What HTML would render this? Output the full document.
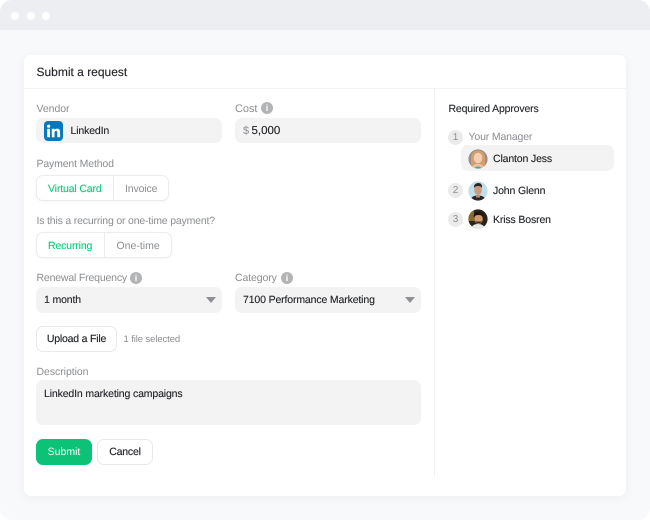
<!DOCTYPE html>
<html><head><meta charset="utf-8">
<style>
html,body{margin:0;padding:0;width:650px;height:520px;overflow:hidden;background:#fff}
*{box-sizing:border-box}
body{font-family:"Liberation Sans",sans-serif;font-size:10.5px;color:#1f2125;text-rendering:geometricPrecision}
.a{position:absolute;white-space:nowrap}
#win{position:absolute;left:0;top:0;width:650px;height:520px;background:#f8f9fb;border-radius:12px;overflow:hidden}
#bar{position:absolute;left:0;top:0;width:650px;height:30px;background:#edeef1}
.dot{position:absolute;top:12px;width:8px;height:8px;border-radius:50%;background:#fff}
#card{position:absolute;left:24px;top:55px;width:602px;height:441px;background:#fff;border-radius:7px;box-shadow:0 2px 10px rgba(30,40,60,.05)}
.lbl{color:#8b8d90;font-size:10.5px;line-height:14px;letter-spacing:-.05px}
.inp{position:absolute;background:#f3f3f3;border-radius:7px}
.seg{position:absolute;background:#fff;border:1px solid #ebecec;border-radius:7px;box-shadow:0 1px 2px rgba(0,0,0,.04)}
.btn{position:absolute;background:#fff;border:1px solid #e8e9ea;border-radius:7px;text-align:center;font-size:10.5px;letter-spacing:-.2px;color:#202226;-webkit-text-stroke:.15px #202226}
.info{position:absolute;width:12px;height:12px;border-radius:50%;background:#b3b4b6;color:#fff;font-size:9px;font-weight:bold;line-height:12px;text-align:center}
.tri{position:absolute;width:0;height:0;border-left:5.5px solid transparent;border-right:5.5px solid transparent;border-top:6px solid #8f9093}
.num{position:absolute;width:15px;height:15px;border-radius:50%;background:#ebebeb;color:#8d8e90;font-size:10px;line-height:15px;text-align:center}
.t{line-height:14px;letter-spacing:-.14px;-webkit-text-stroke:.12px #1f2125}
.g{line-height:14px;letter-spacing:-.14px;color:#0fce7c;-webkit-text-stroke:.12px #0fce7c}
.m{line-height:14px;letter-spacing:-.14px;color:#8b8d90}
</style></head>
<body>
<div id="win">
<div id="bar"></div>
<div class="dot" style="left:11px"></div><div class="dot" style="left:27px"></div><div class="dot" style="left:42px"></div>
<div id="card"></div>
<div class="a" style="left:24px;top:88px;width:602px;height:1px;background:#f3f3f4"></div>
<div class="a" style="left:434px;top:89px;width:1px;height:388px;background:#f1f1f2"></div>
<div class="a t" style="left:36.5px;top:64.500px;font-size:12px;letter-spacing:0;color:#212327">Submit a request</div>

<div class="a lbl" style="left:36.5px;top:101.500px">Vendor</div>
<div class="inp" style="left:36px;top:118px;width:186px;height:25px"></div>
<svg class="a" style="left:44px;top:121px" width="19" height="20" viewBox="0 0 19 20"><rect width="19" height="20" rx="4" fill="#0a78b8"/><rect x="3.2" y="7.8" width="2.8" height="8.4" fill="#fff"/><circle cx="4.6" cy="5.2" r="1.6" fill="#fff"/><path d="M7.8 7.8h2.7v1.2c.5-.8 1.4-1.4 2.6-1.4 2.3 0 3 1.4 3 3.6v5h-2.8v-4.400c0-1.100-.3-1.900-1.300-1.900-1.100 0-1.500.8-1.500 1.900v4.400H7.800z" fill="#fff"/></svg>
<div class="a t" style="left:70.5px;top:123.500px">LinkedIn</div>

<div class="a lbl" style="left:235px;top:101.500px;font-size:11px">Cost</div>
<div class="info" style="left:261px;top:102px">i</div>
<div class="inp" style="left:235px;top:118px;width:186px;height:25px"></div>
<div class="a m" style="left:243px;top:123.500px;font-size:11px">$</div>
<div class="a t" style="left:251.5px;top:123.500px;font-size:11.5px;letter-spacing:0">5,000</div>

<div class="a lbl" style="left:36.5px;top:156.500px;letter-spacing:-.15px">Payment Method</div>
<div class="seg" style="left:36px;top:175px;width:133px;height:26px"></div>
<div class="a" style="left:113px;top:176px;width:1px;height:24px;background:#ebecec"></div>
<div class="a g" style="left:48px;top:181.500px">Virtual Card</div>
<div class="a m" style="left:125px;top:181.500px">Invoice</div>

<div class="a lbl" style="left:36.5px;top:213.500px;letter-spacing:-.18px">Is this a recurring or one-time payment?</div>
<div class="seg" style="left:36px;top:232px;width:136px;height:26px"></div>
<div class="a" style="left:104px;top:233px;width:1px;height:24px;background:#ebecec"></div>
<div class="a g" style="left:48px;top:238.500px">Recurring</div>
<div class="a m" style="left:116.5px;top:238.500px;letter-spacing:0">One-time</div>

<div class="a lbl" style="left:36.5px;top:271px;letter-spacing:-.17px">Renewal Frequency</div>
<div class="info" style="left:130px;top:272px">i</div>
<div class="inp" style="left:36px;top:287px;width:186px;height:26px"></div>
<div class="a t" style="left:44px;top:293px">1 month</div>
<div class="tri" style="left:205.5px;top:297px"></div>

<div class="a lbl" style="left:235px;top:271px;letter-spacing:-.1px">Category</div>
<div class="info" style="left:281px;top:272px">i</div>
<div class="inp" style="left:235px;top:287px;width:186px;height:26px"></div>
<div class="a t" style="left:243px;top:293px">7100 Performance Marketing</div>
<div class="tri" style="left:404.5px;top:297px"></div>

<div class="btn" style="left:36px;top:326px;width:81px;height:26px;line-height:25px">Upload a File</div>
<div class="a m" style="left:123.5px;top:332.500px;font-size:9.5px;letter-spacing:-.1px">1 file selected</div>

<div class="a lbl" style="left:36.5px;top:364.500px">Description</div>
<div class="inp" style="left:36px;top:380px;width:385px;height:45px"></div>
<div class="a t" style="left:44px;top:386.500px">LinkedIn marketing campaigns</div>

<div class="a" style="left:36px;top:439px;width:56px;height:26px;background:#0cc277;border-radius:7px;color:#fff;text-align:center;line-height:26px;font-size:10.5px">Submit</div>
<div class="btn" style="left:97px;top:439px;width:56px;height:26px;line-height:25px">Cancel</div>

<div class="a t" style="left:448.5px;top:101.500px;font-size:10.5px;letter-spacing:-.15px;color:#25272b">Required Approvers</div>

<div class="num" style="left:448px;top:130px">1</div>
<div class="a lbl" style="left:468.5px;top:129.500px;letter-spacing:-.15px">Your Manager</div>
<div class="inp" style="left:461px;top:145px;width:153px;height:26px"></div>
<svg class="a" style="left:468px;top:149px" width="20" height="20" viewBox="0 0 20 20"><defs><clipPath id="c1"><circle cx="10" cy="10" r="9.6"/></clipPath></defs><g clip-path="url(#c1)"><rect width="20" height="20" fill="#9d8f88"/><path d="M3 20V9c0-5 3-7.500 7-7.500s7 2.500 7 7.500v11z" fill="#cf9f6e"/><ellipse cx="10" cy="9" rx="4.300" ry="5.300" fill="#f4cdb2"/><path d="M3 20c1-4 4-5 7-5s6 1 7 5z" fill="#edc0a2"/><path d="M6 20c1-2 2.500-2.500 4-2.500s3 .5 4 2.500z" fill="#4fa59c"/></g></svg>
<div class="a t" style="left:493px;top:151.500px">Clanton Jess</div>

<div class="num" style="left:448px;top:183px">2</div>
<svg class="a" style="left:468px;top:180.500px" width="20" height="20" viewBox="0 0 20 20"><defs><clipPath id="c2"><circle cx="10" cy="10" r="9.6"/></clipPath></defs><g clip-path="url(#c2)"><rect width="20" height="20" fill="#bfe0ea"/><path d="M2 20c.5-4 4-5.500 8-5.500s7.500 1.500 8 5.500z" fill="#26282a"/><ellipse cx="10" cy="9" rx="3.800" ry="5" fill="#c99a7c"/><path d="M6 7c-.5-3.500 2-5 4.500-5S14.500 4 14 7c-1-1.500-2-2-4-2s-3 .5-4 2z" fill="#2b2523"/><path d="M8 14h4v2.500H8z" fill="#b88a6c"/></g></svg>
<div class="a t" style="left:493px;top:183.500px">John Glenn</div>

<div class="num" style="left:448px;top:212px">3</div>
<svg class="a" style="left:468px;top:209px" width="20" height="20" viewBox="0 0 20 20"><defs><clipPath id="c3"><circle cx="10" cy="10" r="9.6"/></clipPath></defs><g clip-path="url(#c3)"><rect width="20" height="20" fill="#2a2418"/><rect x="0" y="0" width="6" height="12" fill="#8a6a24"/><path d="M3 20c.5-3.500 3.500-5 7-5s6.500 1.500 7 5z" fill="#e8e8e8"/><ellipse cx="10.500" cy="10" rx="4.300" ry="5" fill="#d09a70"/><path d="M5.500 8c0-3.500 2.500-5 5-5s5 1.500 5 5c-1.500-1.500-3-2-5-2s-3.500.5-5 2z" fill="#1c1610"/><path d="M7 12c1 3 6 3 7 0-1 .8-6 .8-7 0z" fill="#3a2a1c"/></g></svg>
<div class="a t" style="left:493px;top:212.500px">Kriss Bosren</div>
</div>
</body></html>
